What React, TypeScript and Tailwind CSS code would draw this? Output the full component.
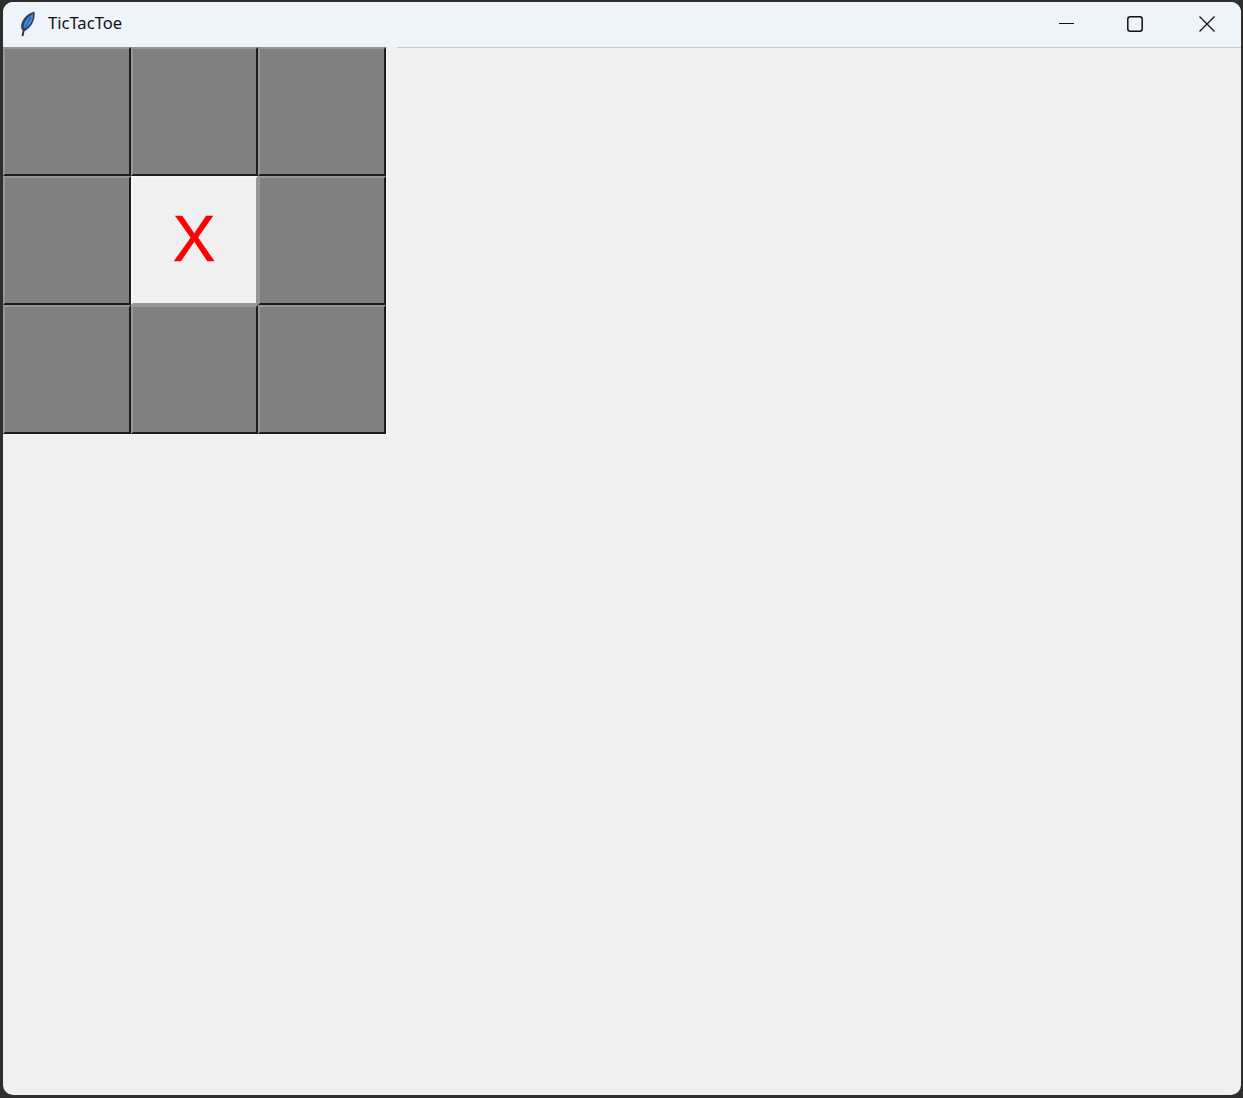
const CELLS = [
    { id: 1, w: "w-[128px]" },
    { id: 2, w: "w-[127px]" },
    { id: 3, w: "w-[128px]" },
    { id: 4, w: "w-[128px]" },
    { id: 5, w: "w-[127px]", mark: "X" },
    { id: 6, w: "w-[128px]" },
    { id: 7, w: "w-[128px]" },
    { id: 8, w: "w-[127px]" },
    { id: 9, w: "w-[128px]" },
];

function Feather() {
    return (
        <svg width="18" height="26" viewBox="0 0 18 26" className="shrink-0">
            <path d="M3.5 25 L5 18" stroke="#2a2a2a" strokeWidth="1.8" fill="none" />
            <path d="M2.5 18 C0.5 12 6 3 15.5 0.5 C16.5 8 13 16 6 20 L4 20 Z" fill="#33415a" />
            <path d="M5 18 C3.5 13 8 6 14 3 C14.5 9 11 15 5 18 Z" fill="#3f8be0" />
            <path d="M5 18 L12 6" stroke="#1f4f94" strokeWidth="0.8" fill="none" />
        </svg>
    );
}

function Cell({ w, mark }: { w: string; mark?: string }) {
    if (mark) {
        return (
            <div className={`${w} h-[129px] flex items-center justify-center bg-[#f0f0f0] border-2 border-t-[#f6f6f6] border-l-[#f6f6f6] border-r-[#969696] border-b-[#969696] pb-1 pr-px font-['Liberation_Sans',sans-serif] text-[64px] leading-none text-[#ff0000] [-webkit-text-stroke:0.5px_#ff0000]`}>
                {mark}
            </div>
        );
    }
    return (
        <div className={`${w} h-[129px] bg-[#808080] border-2 border-t-[#979797] border-l-[#979797] border-r-[#1c1c1c] border-b-[#1c1c1c]`} />
    );
}

export default function App() {
    return (
        <div className="h-[1098px] w-[1243px] overflow-hidden bg-[#2e2e2e]">
            <div className="flex h-[1093px] w-[1238px] ml-[3px] mt-[2px] flex-col overflow-hidden rounded-[10px] bg-[#f0f0f0]">
                {/* Title bar */}
                <div className="flex h-[45px] shrink-0 items-center bg-[#eff3fa] pb-[2px] pl-[16px] text-[#111111]">
                    <Feather />
                    <span className="ml-[11px] font-['Noto_Sans',sans-serif] text-[16.6px]">TicTacToe</span>
                    <div className="ml-auto flex items-center pr-[26px] text-[#111111]">
                        <svg width="16" height="16" viewBox="0 0 16 16" className="mr-[52px]">
                            <path d="M0 7.5 H15" stroke="currentColor" strokeWidth="1.2" fill="none" />
                        </svg>
                        <svg width="16" height="16" viewBox="0 0 16 16" className="mr-[56px]">
                            <rect x="0.8" y="0.8" width="14.4" height="14.4" rx="2.5" stroke="currentColor" strokeWidth="1.5" fill="none" />
                        </svg>
                        <svg width="16" height="16" viewBox="0 0 16 16">
                            <path d="M0.5 0.5 L15.5 15.5 M15.5 0.5 L0.5 15.5" stroke="currentColor" strokeWidth="1.3" fill="none" />
                        </svg>
                    </div>
                </div>

                {/* Board + rest of the window */}
                <div className="flex flex-1">
                    <div className="flex h-[387px] w-[383px] flex-wrap content-start">
                        {CELLS.map((cell) => (
                            <Cell key={cell.id} w={cell.w} mark={cell.mark} />
                        ))}
                    </div>
                    <div className="ml-[11px] flex-1 border-t border-[#c8ccd0]" />
                </div>
            </div>
        </div>
    );
}
